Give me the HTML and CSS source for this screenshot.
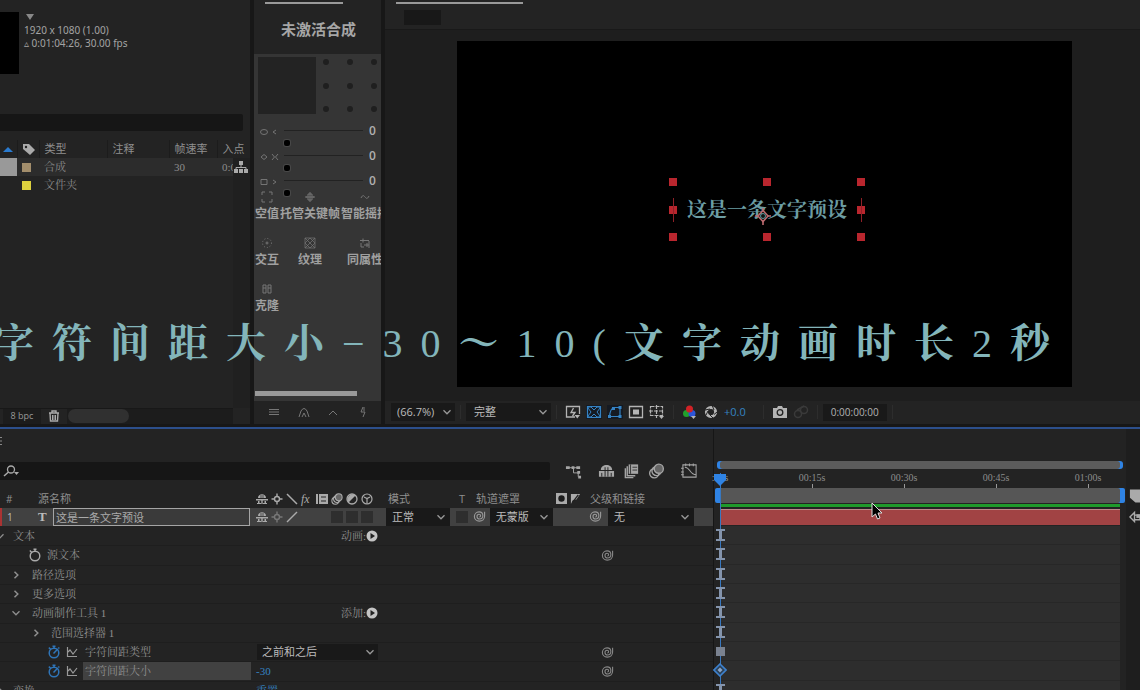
FILE: index.html
```html
<!DOCTYPE html>
<html lang="zh-CN">
<head>
<meta charset="utf-8">
<title>合成</title>
<link rel="stylesheet" href="styles.css">
</head>
<body>
<svg class="defs" aria-hidden="true">
  <symbol id="chev-d" viewBox="0 0 10 10"><path d="M1.500 3.300 5 6.800 8.500 3.300" fill="none" stroke="currentColor" stroke-width="1.300"/></symbol>
  <symbol id="chev-r" viewBox="0 0 10 10"><path d="M3.500 1.800 6.800 5 3.500 8.200" fill="none" stroke="currentColor" stroke-width="1.500"/></symbol>
  <symbol id="spiral" viewBox="0 0 14 14"><path d="M12.500 2v4.500c0 3.500-2.600 5.500-5.700 5.500C3.500 12 1.500 9.600 1.500 7s2-5 5-5c2.400 0 4.100 1.700 4.100 4S9 9.700 7.100 9.700 4.300 8.500 4.300 7 5.300 4.600 6.500 4.600s1.700.8 1.700 1.700-.6 1.200-1.400 1.200" fill="none" stroke="currentColor" stroke-width="1.200"/></symbol>
  <symbol id="watch" viewBox="0 0 14 14"><g fill="none" stroke="currentColor" stroke-width="1.400"><circle cx="7" cy="8" r="4.800"/><path d="M5.500 1.200h3M7 1.200v2M1.800 2.600l1.800 1.600"/></g></symbol>
  <symbol id="watch-on" viewBox="0 0 14 14"><g fill="none" stroke="currentColor" stroke-width="1.500"><circle cx="7" cy="8" r="4.800"/><path d="M5.500 1.200h3M7 1.200v2M1.800 2.600l1.800 1.600M6.500 8.500 10.800 4M12.300 2.500l-1 1"/></g></symbol>
  <symbol id="graph" viewBox="0 0 12 12"><path d="M1.500 1v9.500H11M2 6l2-2 3 4 4-5" fill="none" stroke="currentColor" stroke-width="1.200"/></symbol>
  <symbol id="play" viewBox="0 0 12 12"><circle cx="6" cy="6" r="5.500" fill="currentColor"/><path d="M4.500 3v6L9 6z" fill="#222"/></symbol>
  <symbol id="shy" viewBox="0 0 12 12"><path d="M2 5c0-5 8-5 8 0zM0 6h12v1.500H0zM5.300 7h1.400v4H5.300zM2 8h1.500v3H2zM8.500 8H10v3H8.500zM1 10h4v1H1zM7 10h4v1H7z" fill="currentColor"/><path d="M5 2v3M7 2v3" stroke="#222" stroke-width=".7"/></symbol>
  <symbol id="sun" viewBox="0 0 12 12"><g stroke="currentColor" stroke-width="1.400" fill="none"><circle cx="6" cy="6" r="2.500"/><path d="M6 .5v3M6 8.500v3M.5 6h3M8.500 6h3"/></g></symbol>
  <symbol id="slash" viewBox="0 0 12 12"><path d="M1 11 11 1" stroke="currentColor" stroke-width="1.500"/></symbol>
  <symbol id="bslash" viewBox="0 0 12 12"><path d="M1 1l10 10" stroke="currentColor" stroke-width="1.500"/></symbol>
  <symbol id="film" viewBox="0 0 12 12"><path d="M0 1h12v10H0z" fill="currentColor"/><path d="M2.500 1v10M5 4h5M5 8h5" stroke="#222"/></symbol>
  <symbol id="blur" viewBox="0 0 14 14"><g fill="none" stroke="currentColor" stroke-width="1.200"><circle cx="5" cy="9" r="4"/><circle cx="7" cy="7" r="4"/><circle cx="9" cy="5" r="4" fill="#666"/></g></symbol>
  <symbol id="half" viewBox="0 0 12 12"><circle cx="6" cy="6" r="5" fill="none" stroke="currentColor" stroke-width="1.300"/><path d="M9.500 2.500a5 5 0 0 0-7 7z" fill="currentColor"/></symbol>
  <symbol id="cube" viewBox="0 0 12 12"><g fill="none" stroke="currentColor" stroke-width="1.200"><circle cx="6" cy="6" r="5"/><path d="M3 4l3 1.500L9 4M6 5.500V11"/></g></symbol>
</svg>

<main class="app">
  <div class="upper">
    <section class="project" aria-label="项目">
      <div class="info">
        <div class="thumb"></div>
        <div class="meta">
          <svg class="tri" viewBox="0 0 8 6"><path d="M0 0h8L4 6z" fill="#888"/></svg>
          <p>1920 x 1080 (1.00)</p>
          <p>▵ 0:01:04:26, 30.00 fps</p>
        </div>
      </div>
      <input class="find" type="text" aria-label="搜索项目">
      <div class="listing">
        <table class="items">
          <colgroup><col class="c-sort"><col class="c-tag"><col class="c-type"><col class="c-note"><col class="c-rate"><col></colgroup>
          <thead><tr>
            <th aria-label="名称"><svg class="up" viewBox="0 0 12 6"><path d="M0 6 6 0l6 6z" fill="#2a7bd0"/></svg></th>
            <th aria-label="标签"><svg class="i12" viewBox="0 0 12 12"><path d="M0 1h6l6 6-5 5-7-6z" fill="#aaa"/><circle cx="3" cy="4" r="1.200" fill="#222"/></svg></th>
            <th>类型</th><th>注释</th><th>帧速率</th><th>入点</th>
          </tr></thead>
          <tbody>
            <tr class="picked"><td class="name"></td><td><i class="chip tan"></i></td><td>合成</td><td></td><td>30</td><td>0:0</td></tr>
            <tr><td></td><td><i class="chip yellow"></i></td><td>文件夹</td><td></td><td></td><td></td></tr>
          </tbody>
        </table>
        <div class="rail"><svg class="i14" viewBox="0 0 14 14"><path d="M5 1h4v4H5zM0 9h4v4H0zM5 9h4v4H5zM10 9h4v4h-4z" fill="#aaa"/><path d="M7 4v4M2 10V7.500h10V10" fill="none" stroke="#aaa"/></svg></div>
      </div>
      <div class="pfoot">
        <button class="bpc">8 bpc</button>
        <button class="bin" aria-label="删除"><svg class="i12" viewBox="0 0 12 12"><path d="M1 3h10M4 3V1h4v2M2 3l.5 8h7l.5-8" fill="none" stroke="currentColor" stroke-width="1.400"/><path d="M4.500 5v5M6 5v5M7.500 5v5" stroke="currentColor"/></svg></button>
        <div class="hscroll"><i></i></div>
      </div>
    </section>

    <section class="script" aria-label="脚本">
      <div class="tabline"></div>
      <h1>未激活合成</h1>
      <div class="kit">
        <div class="anchor">
          <div class="pad"></div>
          <div class="dots"><i></i><i></i><i></i><i></i><i></i><i></i><i></i><i></i><i></i></div>
        </div>
        <div class="sliders">
          <label><svg viewBox="0 0 20 8"><ellipse cx="5" cy="4" rx="3.500" ry="2.500"/><path d="M17 2l-3 2 3 2"/></svg><input type="range" value="0"><output>0</output></label>
          <label><svg viewBox="0 0 20 8"><path d="M2 4l3-2.500L8 4 5 6.500zM13 1l2.500 3L13 7M19 1l-2.500 3L19 7"/></svg><input type="range" value="0"><output>0</output></label>
          <label><svg viewBox="0 0 20 8"><path d="M2 1.500h6v5H2zM14 2l3 2-3 2"/></svg><input type="range" value="0"><output>0</output></label>
        </div>
        <div class="tools">
          <button><svg viewBox="0 0 12 12"><path d="M1 4V1h3M8 1h3v3M11 8v3H8M4 11H1V8"/></svg>空值</button>
          <button><svg viewBox="0 0 12 12"><path d="M6 1v10M4 3v6M8 3v6M2 5v2M10 5v2M2 6h8M4 3h4M4 9h4"/></svg>托管关键帧</button>
          <button><svg viewBox="0 0 12 12"><path d="M2 7c2-4 3-2 4-1s2 3 4-1"/></svg>智能摇摆</button>
          <button><svg viewBox="0 0 12 12"><circle cx="6" cy="6" r="4.500" stroke-dasharray="1 2"/><circle cx="6" cy="6" r="1"/></svg>交互</button>
          <button><svg viewBox="0 0 12 12"><path d="M1 1h10v10H1zM1 1l10 10M11 1 1 11M6 1l5 5-5 5-5-5z" stroke-width=".7"/></svg>纹理</button>
          <button><svg viewBox="0 0 12 12"><path d="M1 3.500h9M4 1.500v4M2 6v4h3M5 8h5v3M10 4v4M8 6v4"/></svg>同属性</button>
          <button><svg viewBox="0 0 12 12"><path d="M2 5h3v5H2zM7 5h3v5H7zM2 5V2h3v3M7 5V2h3v3"/></svg>克隆</button>
        </div>
        <div class="bar"></div>
      </div>
      <div class="sfoot">
        <button aria-label="菜单"><svg viewBox="0 0 12 12"><path d="M1 3.500h10M1 6h10M1 8.500h10"/></svg></button>
        <button aria-label="曲线"><svg viewBox="0 0 12 12"><path d="M1 11l2-6q3-5 6 0l2 6M4 11l2-4 2 4"/></svg></button>
        <button aria-label="展开"><svg viewBox="0 0 12 12"><path d="M2 9l4-4 4 4"/></svg></button>
        <button aria-label="快捷"><svg viewBox="0 0 12 12"><path d="M6 1 4 6h4l-2 5M7 1v4"/></svg></button>
      </div>
    </section>

    <section class="viewer" aria-label="合成预览">
      <div class="vtabs"><i class="vline"></i><i class="vtab"></i></div>
      <div class="stage">
        <div class="comp">
          <div class="selection">
            <span>这是一条文字预设</span>
            <i class="h tl"></i><i class="h tc"></i><i class="h tr"></i><i class="h ml"></i><i class="h mr"></i><i class="h bl"></i><i class="h bc"></i><i class="h br"></i>
            <svg class="pivot" viewBox="0 0 18 20"><g fill="none" stroke="#bd6b70" stroke-width="1.600"><path d="M9 4.500 14 10l-5 5.500L4 10z"/><path d="M9 15v4M1 10h3M14 10h3M9 2v2"/></g><circle cx="9" cy="10" r="2.500" fill="#111" stroke="#5b9aa0"/></svg>
          </div>
        </div>
      </div>
      <div class="vbar">
        <span class="pick zoom"><select aria-label="放大率"><option>(66.7%)</option></select><svg><use href="#chev-d"/></svg></span>
        <i class="sep"></i>
        <span class="pick res"><select aria-label="分辨率"><option>完整</option></select><svg><use href="#chev-d"/></svg></span>
        <i class="sep"></i>
        <div class="vicons">
          <button aria-label="快速预览"><svg viewBox="0 0 16 14"><path d="M10 12H1.500V1.500h13V9M8.500 3 6 7.500h4L7.500 11" fill="none" stroke="currentColor" stroke-width="1.300"/><path d="M9.500 10H15l-2.700 3.500z" fill="currentColor"/></svg></button>
          <button class="on" aria-label="透明网格"><svg viewBox="0 0 16 14"><path d="M1.500 1.500h13v11h-13z" fill="none" stroke="currentColor" stroke-width="1.200"/><path d="M2 2h3l3 3 3-3h3v1l-3 4 3 4v1h-3L8 9l-3 3H2v-1l3-4-3-4z" fill="none" stroke="currentColor"/></svg></button>
          <button class="on" aria-label="蒙版可见"><svg viewBox="0 0 16 14"><path d="M2.500 11.500C3 6 5 3 7 2.500h6v9z" fill="none" stroke="currentColor" stroke-width="1.200"/><path d="M1 10h3v3H1zM11.500 10h3v3h-3zM11.500 1h3v3h-3zM5 2h3v3H5z" fill="currentColor"/></svg></button>
          <button aria-label="目标区域"><svg viewBox="0 0 16 14"><path d="M1.500 1.500h13v11h-13z" fill="none" stroke="currentColor" stroke-width="1.300"/><path d="M5 4.500h6v5H5z" fill="currentColor"/></svg></button>
          <button aria-label="网格和参考线"><svg viewBox="0 0 16 14"><path d="M1.500 1.500h12v9h-12zM7.500 0v13M0 6h15" fill="none" stroke="currentColor" stroke-width="1.200" stroke-dasharray="4 1"/><path d="M10 11h5l-2.500 3z" fill="currentColor"/></svg></button>
        </div>
        <i class="sep"></i>
        <div class="vicons color">
          <button aria-label="通道"><svg viewBox="0 0 16 14"><circle cx="4.500" cy="8.500" r="3.500" fill="#22a02c"/><circle cx="10" cy="8.500" r="3.500" fill="#2d55d8"/><circle cx="7.500" cy="4" r="3.500" fill="#d02226"/><path d="M9 11h5l-2.500 3z" fill="currentColor"/></svg></button>
          <button aria-label="曝光"><svg viewBox="0 0 14 14"><circle cx="7" cy="7" r="4.600" fill="none" stroke="currentColor" stroke-width="3"/><path d="M1 5l5-1M8 0l2 5M13 7l-3 2.500M9 13l-3-3M2 10l2-4" stroke="#222"/></svg></button>
          <span class="blue">+0.0</span>
        </div>
        <i class="sep"></i>
        <div class="vicons">
          <button aria-label="快照"><svg viewBox="0 0 16 14"><path d="M1 3h4l1-2h4l1 2h4v10H1z" fill="currentColor"/><circle cx="8" cy="7.500" r="2.800" fill="none" stroke="#222" stroke-width="1.300"/></svg></button>
          <button class="off" aria-label="显示快照"><svg viewBox="0 0 16 14"><g fill="none" stroke="currentColor" stroke-width="1.500"><circle cx="5" cy="9" r="3.500"/><circle cx="11" cy="5" r="3.500"/><path d="M4 5l7-4"/></g></svg></button>
        </div>
        <i class="sep"></i>
        <button class="time">0:00:00:00</button>
        <i class="sep"></i>
      </div>
    </section>
  </div>

  <section class="timeline" aria-label="时间轴">
    <div class="layers">
      <div class="menu"><svg viewBox="0 0 4 10"><path d="M0 1.500h2M0 5h2M0 8.500h2" stroke="#888" stroke-width="1.200"/></svg></div>
      <div class="finder">
        <div class="search"><svg viewBox="0 0 18 12"><circle cx="8" cy="4.500" r="3.500" fill="none" stroke="#aaa" stroke-width="1.300"/><path d="M5.500 7 1 11" stroke="#aaa" stroke-width="1.500"/><path d="M11 7h5l-2.500 3z" fill="#aaa"/></svg><input type="text" aria-label="搜索图层"></div>
        <div class="modes">
          <button aria-label="合成流程图"><svg viewBox="0 0 18 16"><path d="M1 3h4v3H1zM7 3h3v3H7zM12 3h4v3h-4zM13 8h3v3h-3zM14 13h3v3h-3z" fill="currentColor"/><path d="M3 4.500h10M9 5v5h5v4" fill="none" stroke="currentColor"/></svg></button>
          <button aria-label="隐藏图层"><svg viewBox="0 0 18 16"><path d="M3 7c0-7 12-7 12 0zM1 8h16v6H1z" fill="currentColor"/><path d="M7.500 4v10M10.500 4v10M4 10v4M14 10v4" stroke="#222"/></svg></button>
          <button aria-label="帧混合"><svg viewBox="0 0 18 16"><path d="M6 1h10v10H6z" fill="currentColor"/><path d="M4.500 3v10H13M2.500 5v10H11" fill="none" stroke="currentColor" stroke-width="1.500"/><path d="M8 1v10M10 4h5M10 7h5" stroke="#333"/></svg></button>
          <button aria-label="运动模糊"><svg><use href="#blur"/></svg></button>
          <button class="curve" aria-label="图表编辑器"><svg viewBox="0 0 18 16"><path d="M2 1.500h14v13H2zM4 4c6 0 5 8 12 8M5 0v3M9 0v3M13 0v3M0 5h3M0 9h3M0 12h3" fill="none" stroke="currentColor" stroke-width="1.100"/></svg></button>
        </div>
      </div>

      <div class="cols heads">
        <span class="no">#</span>
        <span>源名称</span>
        <div class="switches"><svg><use href="#shy"/></svg><svg><use href="#sun"/></svg><svg><use href="#bslash"/></svg><em>fx</em><svg><use href="#film"/></svg><svg><use href="#blur"/></svg><svg><use href="#half"/></svg><svg><use href="#cube"/></svg></div>
        <span>模式</span>
        <div class="matte"><b>T</b><span>轨道遮罩</span></div>
        <div class="parent"><svg viewBox="0 0 12 12"><path d="M0 0h12v12H0z" fill="#aaa"/><circle cx="6" cy="6" r="3.500" fill="#1b1b1b"/></svg><svg viewBox="0 0 12 12"><path d="M1 1h10L7 7l-4 1-2 4z" fill="#aaa"/><path d="M3 10 9 2" stroke="#222" stroke-width="1.500"/></svg><span>父级和链接</span></div>
      </div>

      <div class="cols layer">
        <span class="no">1</span>
        <div class="title"><b>T</b><input type="text" value="这是一条文字预设" aria-label="图层名称"></div>
        <div class="switches"><svg><use href="#shy"/></svg><svg class="dim"><use href="#sun"/></svg><svg><use href="#slash"/></svg><i></i><i></i><i class="box"></i><i class="box"></i><i class="box"></i></div>
        <span class="pick"><select aria-label="模式"><option>正常</option></select><svg><use href="#chev-d"/></svg></span>
        <div class="matte"><i class="box"></i><svg><use href="#spiral"/></svg><span class="pick"><select aria-label="轨道遮罩"><option>无蒙版</option></select><svg><use href="#chev-d"/></svg></span></div>
        <div class="parent"><svg><use href="#spiral"/></svg><span class="pick"><select aria-label="父级和链接"><option>无</option></select><svg><use href="#chev-d"/></svg></span></div>
      </div>

      <div class="props">
        <div class="prop lv0"><div class="nm"><svg class="ch"><use href="#chev-d"/></svg><span>文本</span></div><div class="menu-cell"><span>动画:</span><button aria-label="动画菜单"><svg><use href="#play"/></svg></button></div></div>
        <div class="prop lv2"><div class="nm"><svg class="w"><use href="#watch"/></svg><span>源文本</span></div><div></div><svg class="sp"><use href="#spiral"/></svg></div>
        <div class="prop lv1"><div class="nm"><svg class="ch"><use href="#chev-r"/></svg><span>路径选项</span></div></div>
        <div class="prop lv1"><div class="nm"><svg class="ch"><use href="#chev-r"/></svg><span>更多选项</span></div></div>
        <div class="prop lv1"><div class="nm"><svg class="ch"><use href="#chev-d"/></svg><span>动画制作工具 1</span></div><div class="menu-cell"><span>添加:</span><button aria-label="添加菜单"><svg><use href="#play"/></svg></button></div></div>
        <div class="prop lv2"><div class="nm"><svg class="ch"><use href="#chev-r"/></svg><span>范围选择器 1</span></div></div>
        <div class="prop lv3"><div class="nm"><svg class="w on"><use href="#watch-on"/></svg><svg class="g"><use href="#graph"/></svg><span class="lab">字符间距类型</span></div><div><span class="pick"><select aria-label="字符间距类型"><option>之前和之后</option></select><svg><use href="#chev-d"/></svg></span></div><svg class="sp"><use href="#spiral"/></svg></div>
        <div class="prop lv3"><div class="nm"><svg class="w on"><use href="#watch-on"/></svg><svg class="g"><use href="#graph"/></svg><span class="lab hot">字符间距大小</span></div><div><span class="blue val">-30</span></div><svg class="sp"><use href="#spiral"/></svg></div>
        <div class="prop lv0"><div class="nm"><svg class="ch"><use href="#chev-r"/></svg><span>变换</span></div><div><span class="blue val">重置</span></div></div>
      </div>
    </div>

    <div class="tracks">
      <div class="nav"></div>
      <div class="ruler">
        <span>:00s</span><span>00:15s</span><span>00:30s</span><span>00:45s</span><span>01:00s</span>
      </div>
      <div class="work"></div>
      <div class="cache"></div>
      <div class="clip"></div>
      <div class="lanes">
        <div><i class="beam"></i></div><div><i class="beam"></i></div><div><i class="beam"></i></div><div><i class="beam"></i></div><div><i class="beam"></i></div><div><i class="beam"></i></div><div><i class="hold"></i></div><div><svg class="key" viewBox="0 0 14 14"><path d="M7 1l6 6-6 6-6-6z" fill="#2b4158" stroke="#3d82cf" stroke-width="1.600"/><path d="M7 4.500 9.500 7 7 9.500 4.500 7z" fill="#8aa3c4"/></svg></div><div><i class="beam"></i></div>
      </div>
      <div class="playhead"><svg viewBox="0 0 12 14"><path d="M0 1h12v6l-6 6-6-6z" fill="#2f83e4"/></svg></div>
      <svg class="pointer" viewBox="0 0 12 18"><path d="M1 1v14l3.500-3 2 5 2.500-1-2-5h4z" fill="#000" stroke="#ddd"/></svg>
    </div>
    <div class="gutter">
      <svg viewBox="0 0 12 14"><path d="M1 0h11v14H7L1 9z" fill="#aaa"/></svg>
      <svg viewBox="0 0 12 14"><path d="M1 7l5-5v10zM6 5h6v5H6z" fill="none" stroke="#aaa" stroke-width="1.500"/><path d="M8 4h4v4H8z" fill="#aaa"/></svg>
    </div>
  </section>

  <p class="caption">字符间距大小<span>−30</span>～<span>10(</span>文字动画时长<span>2</span>秒</p>
</main>
</body>
</html>
```
FILE: styles.css
```css
* { box-sizing: border-box; }
body {
  margin: 0;
  background: #232323;
  color: #989898;
  font: 11px/14px "Open Sans", "Noto Sans CJK SC", sans-serif;
  overflow: hidden;
}
p, h1 { margin: 0; }
svg { display: block; flex: none; }
button, input, select {
  margin: 0; padding: 0; border: 0; border-radius: 0;
  background: none; color: inherit; font: inherit;
  appearance: none; outline: 0; min-width: 0;
}
.defs { position: absolute; width: 0; height: 0; }
.i12 { width: 12px; height: 12px; }
.i14 { width: 14px; height: 14px; }
.blue { color: #3583c4; }

.app {
  position: relative;
  height: 100vh;
  overflow: hidden;
  display: flex;
  flex-direction: column;
}
.upper {
  display: grid;
  grid-template-columns: 250px 127px 1fr;
  gap: 4px;
  flex: none;
  padding-bottom: 3px;
  background: #171717;
}
.upper > section { background: #232323; min-width: 0; }

/* project panel */
.project { display: flex; flex-direction: column; }
.info { display: flex; gap: 5px; padding-top: 12px; height: 114px; }
.thumb { width: 19px; height: 62px; background: #000; }
.meta { font: 10px/13px "Noto Sans", "DejaVu Sans", sans-serif; color: #a3a3a3; }
.tri { width: 8px; height: 6px; margin: 2px 0 4px 2px; }
.find { width: 243px; height: 17px; background: #161616; border-radius: 0 2px 2px 0; }
.listing { flex: 1; display: flex; padding-top: 9px; }
.items { table-layout: fixed; border-collapse: collapse; align-self: start; width: 233px; }
.items th, .items td { height: 18px; padding: 0 0 0 5px; text-align: left; font-weight: 400; white-space: nowrap; }
.items td { color: #8c8c8c; font-family: "Liberation Serif", "Noto Serif CJK SC", "Noto Sans CJK SC", serif; }
.items th { color: #909090; border-left: 1px solid #1c1c1c; }
.items th:first-child { border: 0; padding-left: 2px; }
.items .picked { background: #2c2c2c; }
.items .picked .name { background: #999; }
.up { width: 12px; height: 5px; }
.c-sort { width: 17px; } .c-tag { width: 22px; } .c-type { width: 68px; } .c-note { width: 62px; } .c-rate { width: 48px; }
.chip { display: block; width: 9px; height: 9px; }
.tan { background: #a38e6c; }
.yellow { background: #ddd03e; }
.rail { position: relative; width: 17px; margin-top: 18px; padding: 2px 0 0 1px; background: #202020; }
.pfoot { display: flex; align-items: stretch; height: 16px; border-top: 1px solid #181818; margin-right: 17px; }
.bpc { width: 38px; margin-left: 3px; background: #1c1c1c; font-size: 9px; color: #999; }
.bin { width: 26px; display: grid; place-items: center; color: #aaa; }
.hscroll { flex: 1; background: #1c1c1c; }
.hscroll i { display: block; width: 61px; height: 14px; border-radius: 7px; background: #303030; margin-left: 1px; }

/* script panel */
.script { display: flex; flex-direction: column; overflow: hidden; }
.tabline { width: 78px; height: 2px; margin: 2px 0 0 11px; background: #999; flex: none; }
.script h1 { font-size: 15px; line-height: 50px; height: 50px; text-align: center; color: #a6a6a6; font-weight: 700; padding-left: 2px; }
.kit { flex: 1; background: #353535; display: flex; flex-direction: column; padding-left: 1px; }
.anchor { display: flex; padding: 3px 0 0 3px; }
.pad { flex: none; width: 58px; height: 57px; background: #232323; }
.dots { flex: none; display: grid; grid-template-columns: repeat(3, 24px); justify-items: center; align-content: space-between; padding: 2px 0; margin-left: -2px; }
.dots i { width: 6px; height: 6px; border-radius: 3px; background: #1f1f1f; }
.sliders { padding: 4px 4px 0 4px; }
.sliders label { display: flex; gap: 5px; height: 25px; align-items: start; }
.sliders svg { width: 20px; height: 8px; margin-top: 10px; fill: none; stroke: #747474; }
.sliders input { flex: 1; height: 25px; margin-top: 9px; }
.sliders input::-webkit-slider-runnable-track { height: 20px; border-top: 1px solid #222; }
.sliders input::-webkit-slider-thumb { appearance: none; width: 6px; height: 6px; margin-top: 9px; background: #000; border: 0; border-radius: 2px; box-shadow: 0 0 0 1px #484848; }
.sliders output { font-size: 12px; line-height: 26px; color: #b0b0b0; width: 9px; text-align: center; font-weight: 600; }
.tools { display: grid; grid-template-columns: 24px 60px 48px; grid-auto-rows: 46px; column-gap: 1px; margin-top: -2px; overflow: hidden; }
.tools button { display: flex; flex-direction: column; align-items: center; align-self: start; gap: 2px; font-size: 12px; line-height: 17px; font-weight: 700; color: #a0a0a0; white-space: nowrap; }
.tools svg { width: 12px; height: 12px; fill: none; stroke: #777; }
.bar { width: 102px; height: 5px; margin: auto 0 5px; background: #999; }
.sfoot { display: flex; justify-content: space-between; align-items: center; height: 23px; padding: 0 12px 0 14px; }
.sfoot svg { width: 12px; height: 12px; fill: none; stroke: #777; }

/* viewer */
.viewer { display: flex; flex-direction: column; }
.vtabs { height: 30px; border-bottom: 1px solid #191919; padding: 2px 0 0 11px; display: flex; flex-direction: column; gap: 6px; }
.vline { width: 127px; height: 2px; background: #999; }
.vtab { width: 37px; height: 15px; margin-left: 8px; background: #181818; }
.stage { padding: 11px 68px 14px 72px; background: #1e1e1e; }
.comp { aspect-ratio: 16 / 9; background: #000; display: grid; grid-template: 141px 55px / 216px 188px; }
.selection { grid-area: 2 / 2; position: relative; display: grid; place-items: center; font: 700 20px/24px "Liberation Serif", "Noto Serif CJK SC", "Noto Sans CJK SC", serif; color: #6c9da3; white-space: nowrap; }
.h { position: absolute; width: 8px; height: 8px; margin: -4px; background: #b9262e; }
.tl, .tc, .tr { top: 0; } .ml, .mr { top: 50%; } .bl, .bc, .br { top: 100%; }
.tl, .ml, .bl { left: 0; } .tc, .bc { left: 50%; } .tr, .mr, .br { left: 100%; }
.ml::after, .mr::after { content: ""; position: absolute; left: 4px; top: -8px; width: 1px; height: 24px; background: #8f2027; }
.pivot { position: absolute; left: 81px; top: 24px; width: 18px; height: 20px; }
.vbar { display: flex; align-items: center; gap: 5px; height: 23px; padding-left: 6px; color: #b4b4b4; }
.pick { display: grid; align-items: center; background: #191919; color: #bcbcbc; }
.pick select, .pick svg { grid-area: 1 / 1; }
.pick select { width: 100%; height: 18px; padding-left: 6px; }
.pick svg { width: 10px; height: 10px; justify-self: end; margin-right: 3px; color: #999; pointer-events: none; }
.zoom { width: 64px; }
.res { width: 85px; }
.res select { padding-left: 8px; }
.sep { width: 1px; height: 14px; background: #2d2d2d; }
.vicons { display: flex; align-items: center; gap: 5px; padding: 0 3px; }
.vicons.color { padding-right: 12px; }
.vicons svg { width: 16px; height: 14px; }
.vicons .on { color: #3583c4; background: #151a22; }
.vicons .off { color: #3a3a3a; }
.time { background: #191919; height: 17px; padding: 0 8px; font-size: 10px; line-height: 17px; }

/* timeline */
.timeline { flex: 1; display: grid; grid-template-columns: 714px 1fr 14px; border-top: 2px solid #2c4f8c; background: #232323; }
.layers { border-right: 1px solid #161616; min-width: 0; }
.menu { height: 33px; padding-top: 7px; }
.menu svg { width: 4px; height: 10px; }
.finder { display: flex; align-items: center; gap: 15px; }
.search { display: flex; align-items: center; width: 550px; height: 18px; background: #161616; border-radius: 0 2px 2px 0; }
.search svg { width: 18px; height: 12px; margin-left: 3px; }
.search input { flex: 1; }
.modes { display: flex; align-items: center; gap: 8px; color: #a5a5a5; }
.modes svg { width: 17px; height: 16px; }
.modes button:nth-child(2) { margin-left: 8px; }
.modes .curve { margin-left: 8px; }
.cols { display: grid; grid-template-columns: 38px 216px 132px 67px 103px 1fr; align-items: center; }
.heads { height: 18px; margin-top: 10px; color: #8f8f8f; }
.heads > span:nth-child(4) { padding-left: 2px; }
.no { padding-left: 6px; font-size: 10px; }
.switches { display: flex; gap: 3px; padding-left: 2px; color: #aaa; align-items: center; }
.switches > * { width: 12px; height: 12px; }
.switches em { font: italic 12px/12px "Liberation Serif", serif; }
.dim { color: #777; }
.box { background: #2e2e2e; height: 12px; width: 12px; }
.matte { display: flex; align-items: center; gap: 5px; padding-left: 3px; }
.matte b { width: 15px; font-weight: 400; padding-left: 3px; }
.parent { display: flex; align-items: center; gap: 3px; }
.heads .parent svg { width: 11px; height: 11px; }
.heads .parent span { margin-left: 6px; }
.layer { height: 18px; background: #414141; color: #bcbcbc; }
.layer .no { border-left: 2px solid #a33; line-height: 18px; padding-left: 5px; }
.title { display: flex; align-items: center; }
.title b { width: 15px; font: 700 13px/18px "Liberation Serif", serif; }
.title input { width: 197px; height: 18px; border: 1px solid #a5a5a5; padding-left: 2px; background: #3a3a3a; color: #aaa; }
.layer .matte svg, .layer .parent > svg { width: 13px; height: 13px; color: #999; }
.layer .matte .pick { width: 65px; margin-left: -1px; }
.layer .pick svg { width: 10px; height: 10px; margin-right: 4px; }
.layer .pick { margin-right: 3px; }
.layer .parent { padding-left: 33px; gap: 6px; }
.layer .parent .pick { width: 86px; }
.props, .lanes { display: grid; grid-template-rows: repeat(9, 1fr); height: 174px; margin-top: 1px; font-family: "Liberation Serif", "Noto Serif CJK SC", "Noto Sans CJK SC", serif; }
.prop { display: grid; grid-template-columns: 251px 350px 1fr; align-items: center; border-bottom: 1px solid #1e1e1e; color: #8f8f8f; }
.nm { display: flex; align-items: center; height: 100%; white-space: nowrap; }
.nm span { line-height: 18px; }
.ch { width: 10px; height: 10px; }
.lv0 .ch { margin: 0 8px 0 -5px; }
.lv1 .ch { margin: 0 11px 0 11px; }
.lv2 .ch { margin: 0 10px 0 31px; }
.w { width: 14px; height: 14px; color: #aaa; }
.lv2 .w { margin: 0 5px 0 28px; }
.lv3 .w { margin: 0 5px 0 47px; }
.w.on { color: #2f75b8; }
.g { width: 12px; height: 12px; margin-right: 5px; color: #999; }
.lab { flex: 1; padding-left: 2px; }
.hot { background: #414141; }
.menu-cell { display: flex; align-items: center; padding-left: 90px; }
.menu-cell svg { width: 12px; height: 12px; color: #c4c4c4; }
.prop .pick { width: 121px; margin-left: 6px; }
.prop .pick select { height: 16px; padding-left: 5px; font-family: "Open Sans", "Noto Sans CJK SC", sans-serif; }
.val { margin-left: 5px; }
.sp { width: 13px; height: 13px; color: #888; }

.tracks { position: relative; padding: 32px 6px 0 6px; min-width: 0; }
.nav { height: 8px; background: #5c5c5c; margin: 0 0 4px; box-shadow: -3px 0 #2f83e4, 3px 0 #2f83e4; border-radius: 3px; }
.ruler { display: grid; grid-template-columns: 23% 23% 23% 23% 8%; height: 15px; font: 10px/10px "Liberation Serif", serif; color: #8c8c8c; }
.ruler span { position: relative; width: 40px; margin-left: -20px; text-align: center; }
.ruler span::after { content: ""; position: absolute; left: 20px; bottom: 0; width: 1px; height: 4px; background: #999; }
.work { height: 15px; background: #565656; box-shadow: -5px 0 #2f83e4, 5px 0 #2f83e4; border-radius: 2px; }
.cache { height: 3px; margin: 1px 0 2px; background: #1f9a2b; }
.clip { height: 16px; border-top: 1px solid #b9898a; background: #a14344; }
.lanes { background: #2d2d2d; }
.lanes div { border-bottom: 1px solid #272727; display: flex; align-items: center; }
.lanes div > * { position: relative; z-index: 1; margin-left: -4px; }
.beam { width: 9px; height: 12px; border: solid #8494ac; border-width: 2px 0; display: grid; justify-content: center; }
.beam::before { content: ""; width: 3px; background: #8494ac; }
.hold { width: 9px; height: 9px; background: #7a8290; }
.lanes .key { width: 14px; height: 14px; margin-left: -7px; }
.playhead { position: absolute; left: 0; top: 44px; bottom: 0; width: 12px; background: linear-gradient(#3878c0, #3878c0) center / 1px 100% no-repeat; }
.pointer { position: absolute; left: 157px; top: 73px; width: 12px; height: 18px; }
.gutter { background: #1e1e1e; padding-top: 60px; display: flex; flex-direction: column; gap: 7px; align-items: end; }
.gutter svg { width: 11px; height: 14px; }

/* caption laid over the workspace */
.caption {
  position: absolute;
  left: -6px;
  top: 314px;
  font: 700 40px/60px "Liberation Serif", "Noto Serif CJK SC", "Noto Sans CJK SC", serif;
  letter-spacing: 18px;
  white-space: nowrap;
  color: #83b5ba;
  pointer-events: none;
}
.caption span { font-weight: 400; }
```
